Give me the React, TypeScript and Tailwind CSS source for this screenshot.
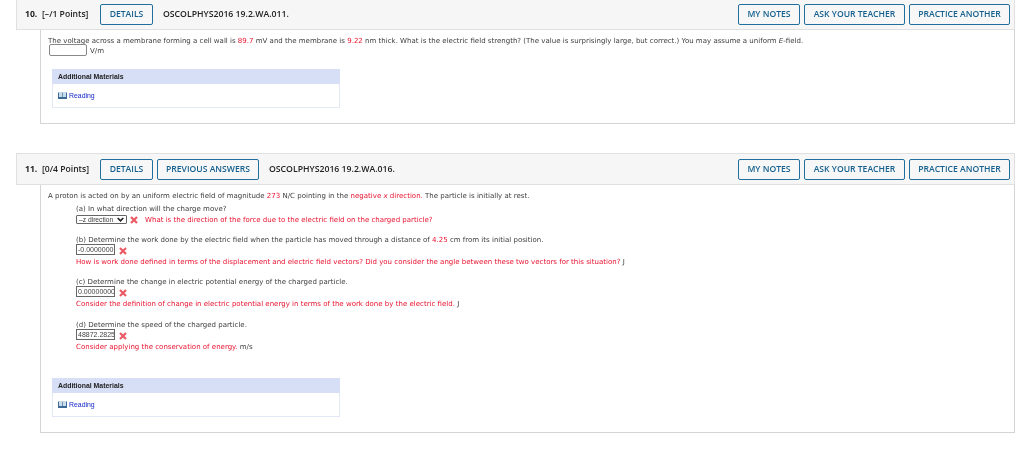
import React from "react";

const body = "font-['DejaVu_Sans',sans-serif] text-[7.02px] leading-[9px] text-[#3c3c3c]";

function Btn({ children, w }: { children: React.ReactNode; w: string }) {
  return (
    <div className={`${w} h-[21px] shrink-0 flex items-center justify-center rounded-[2px] border border-[#1f6f9f] bg-[#f7f7f7] text-[#15608f] text-[8.6px] font-semibold font-['Open_Sans',sans-serif] whitespace-nowrap`}>
      {children}
    </div>
  );
}

function Header({ num, pts, code, prev, cls }: { num: string; pts: string; code: string; prev?: boolean; cls: string }) {
  return (
    <div className={`${cls} ml-4 mr-[9px] bg-[#f6f6f6] border border-[#e0e0e0] flex items-center pl-[8px] pr-[4px] text-[#222] text-[8.6px] font-semibold font-['Open_Sans',sans-serif]`}>
      <div className="w-[75px] shrink-0 flex whitespace-nowrap">
        <span className="font-bold w-[17px]">{num}</span>
        <span>{pts}</span>
      </div>
      <Btn w="w-[53px]">DETAILS</Btn>
      {prev && <div className="ml-[4px]"><Btn w="w-[102px]">PREVIOUS ANSWERS</Btn></div>}
      <span className="ml-[10px] whitespace-nowrap text-[8.7px]">{code}</span>
      <div className="ml-auto flex gap-[4px]">
        <Btn w="w-[62px]">MY NOTES</Btn>
        <Btn w="w-[101px]">ASK YOUR TEACHER</Btn>
        <Btn w="w-[101px]">PRACTICE ANOTHER</Btn>
      </div>
    </div>
  );
}

function Materials() {
  return (
    <div className="ml-[11px] w-[288px] border-x border-b border-[#e3e8f6]">
      <div className="h-[15px] -mx-px bg-[#d6dff5] flex items-center pl-[6px] font-['Liberation_Sans',sans-serif] font-bold text-[6.9px] text-[#222]">
        Additional Materials
      </div>
      <div className="h-[23px] pb-px flex items-center pl-[5px] gap-[2px]">
        <svg width="9" height="7" viewBox="0 0 9 7">
          <rect x="0" y="0.5" width="9" height="6.5" fill="#3b6a96" />
          <rect x="1" y="0" width="3.2" height="5" fill="#c9dcec" />
          <rect x="4.8" y="0" width="3.2" height="5" fill="#c9dcec" />
        </svg>
        <span className="font-['Liberation_Sans',sans-serif] text-[6.9px] text-[#1426c8]">Reading</span>
      </div>
    </div>
  );
}

function Cross() {
  return (
    <svg width="8" height="8" viewBox="0 0 8 8" className="shrink-0 mt-[2px]">
      <path d="M1 1 L7 7 M7 1 L1 7" stroke="#ea5a64" strokeWidth="2.2" />
    </svg>
  );
}

const R = ({ children }: { children: React.ReactNode }) => <span className="text-[#e8112d]">{children}</span>;

function Field({ v }: { v: string }) {
  return (
    <div className="w-[39px] h-[11px] border border-[#666] overflow-hidden whitespace-nowrap text-[7px] leading-[9px] pl-px font-['Liberation_Sans',sans-serif] text-[#444] bg-white shrink-0">
      {v}
    </div>
  );
}

function Part({ q, v, hint, after, mt }: { q: React.ReactNode; v: string; hint: React.ReactNode; after?: string; mt: string }) {
  return (
    <div className={mt}>
      <div className="whitespace-nowrap">{q}</div>
      <div className="flex items-center gap-[4px] h-[11px]"><Field v={v} /><Cross /></div>
      <div className="mt-[2px] whitespace-nowrap"><R>{hint}</R>{after && <span> {after}</span>}</div>
    </div>
  );
}

export default function App() {
  return (
    <div className="w-[1024px] h-[455px] bg-white overflow-hidden blur-[0.3px]">
      <Header cls="h-[31px] -mt-px" num="10." pts="[–/1 Points]" code="OSCOLPHYS2016 19.2.WA.011." />
      <div className={`ml-10 mr-[9px] h-[94px] border-x border-b border-[#d4d4d4] pt-[6px] pl-[7px] ${body}`}>
        <div className="whitespace-nowrap">
          The voltage across a membrane forming a cell wall is <R>89.7</R> mV and the membrane is <R>9.22</R> nm thick. What is the electric field strength? (The value is surprisingly large, but correct.) You may assume a uniform <i>E</i>-field.
        </div>
        <div className="-mt-[1px] ml-px flex items-center gap-[3px]">
          <div className="w-[38px] h-[12px] rounded-[2px] border border-[#888]" />
          <span>V/m</span>
        </div>
        <div className="mt-[13px] -ml-[7px]"><Materials /></div>
      </div>

      <div className="h-[29px]" />

      <Header cls="h-[32px] pt-px" num="11." pts="[0/4 Points]" code="OSCOLPHYS2016 19.2.WA.016." prev />
      <div className={`ml-10 mr-[9px] h-[248px] border-x border-b border-[#d4d4d4] pt-[6px] pl-[7px] ${body}`}>
        <div className="whitespace-nowrap">
          A proton is acted on by an uniform electric field of magnitude <R>273</R> N/C pointing in the <R>negative <i>x</i> direction.</R> The particle is initially at rest.
        </div>
        <div className="ml-[28px] mt-[4px]">
          <div className="whitespace-nowrap">(a) In what direction will the charge move?</div>
          <div className="mt-[1px] flex items-center h-[10px] whitespace-nowrap">
            <div className="w-[51px] h-[9px] border border-[#666] rounded-[1px] flex items-center justify-between pl-[2px] pr-[2px] font-['Liberation_Sans',sans-serif] text-[6.7px]">
              <span>–z direction</span>
              <svg width="7" height="5" viewBox="0 0 7 5"><path d="M0.7 1 L3.5 3.8 L6.3 1" stroke="#222" strokeWidth="1.7" fill="none" /></svg>
            </div>
            <span className="ml-[3px] flex"><Cross /></span>
            <span className="ml-[7px]"><R>What is the direction of the force due to the electric field on the charged particle?</R></span>
          </div>
          <div className="mt-[11px] whitespace-nowrap">(b) Determine the work done by the electric field when the particle has moved through a distance of <R>4.25</R> cm from its initial position.</div>
          <div className="flex items-center gap-[4px] h-[11px]"><Field v="-0.0000000" /><Cross /></div>
          <div className="mt-[2px] whitespace-nowrap"><R>How is work done defined in terms of the displacement and electric field vectors? Did you consider the angle between these two vectors for this situation?</R> J</div>
          <Part mt="mt-[11px]" q="(c) Determine the change in electric potential energy of the charged particle." v="0.00000000" hint="Consider the definition of change in electric potential energy in terms of the work done by the electric field." after="J" />
          <Part mt="mt-[12px]" q="(d) Determine the speed of the charged particle." v="48872.2825" hint="Consider applying the conservation of energy." after="m/s" />
        </div>
        <div className="mt-[27px] -ml-[7px]"><Materials /></div>
      </div>
    </div>
  );
}
